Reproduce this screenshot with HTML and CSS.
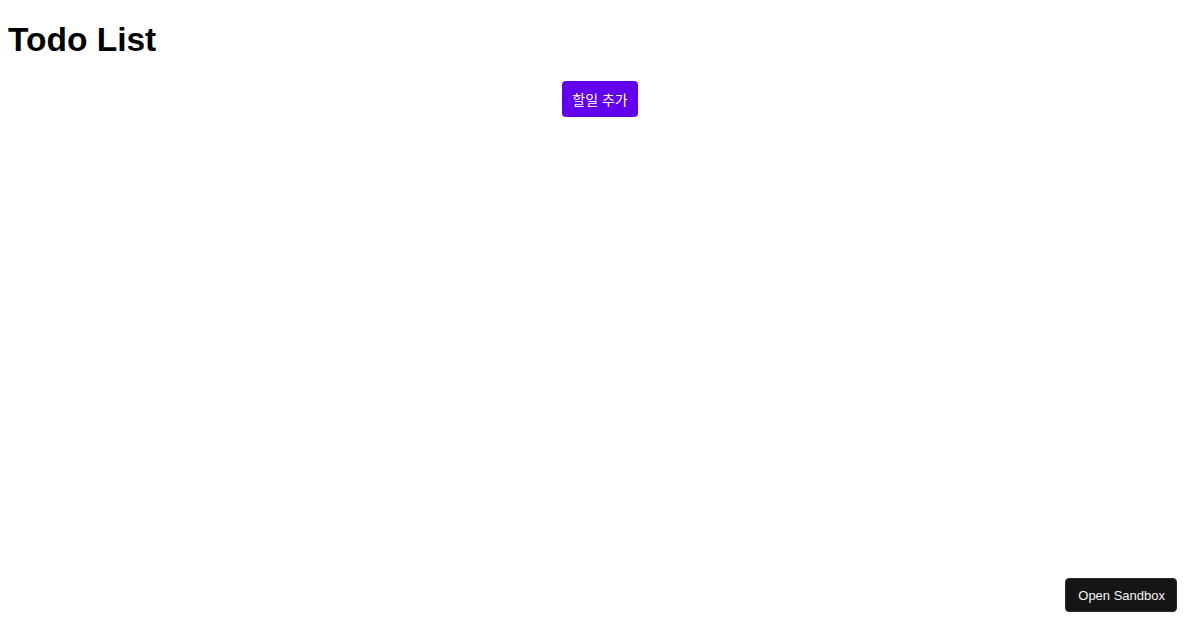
FILE: index.html
```html
<!DOCTYPE html>
<html lang="ko">
<head>
<meta charset="utf-8">
<title>Todo List</title>
<link rel="stylesheet" href="styles.css">
</head>
<body>
<div class="app">
  <h1 class="title">Todo List</h1>
  <div class="actions">
    <button class="add-btn">할일 추가</button>
  </div>
</div>
<a class="sandbox-btn" href="#">Open Sandbox</a>
</body>
</html>
```
FILE: styles.css
```css
html, body {
  margin: 0;
  padding: 0;
  background: #ffffff;
}
body {
  padding: 8px;
  font-family: "Liberation Sans", Arial, "Noto Sans CJK KR", sans-serif;
  color: #000;
}
.title {
  font-size: 33.5px;
  font-weight: bold;
  margin: 13px 0 23px 0;
  line-height: 37px;
}
.actions {
  display: flex;
  justify-content: center;
}
.add-btn {
  background: #6200ee;
  color: #ffffff;
  border: none;
  border-radius: 4px;
  height: 36px;
  padding: 0 10px;
  font-size: 14px;
  font-family: "Liberation Sans", "Noto Sans CJK KR", sans-serif;
  cursor: pointer;
}
.sandbox-btn {
  position: fixed;
  right: 23px;
  bottom: 18px;
  background: #151515;
  color: #f5f5f5;
  border-radius: 4px;
  border: 1px solid #2a2a2a;
  height: 34px;
  box-sizing: border-box;
  padding: 0 11px 0 12px;
  display: flex;
  align-items: center;
  font-family: "Liberation Sans", Arial, sans-serif;
  font-size: 13px;
  text-decoration: none;
}
```
